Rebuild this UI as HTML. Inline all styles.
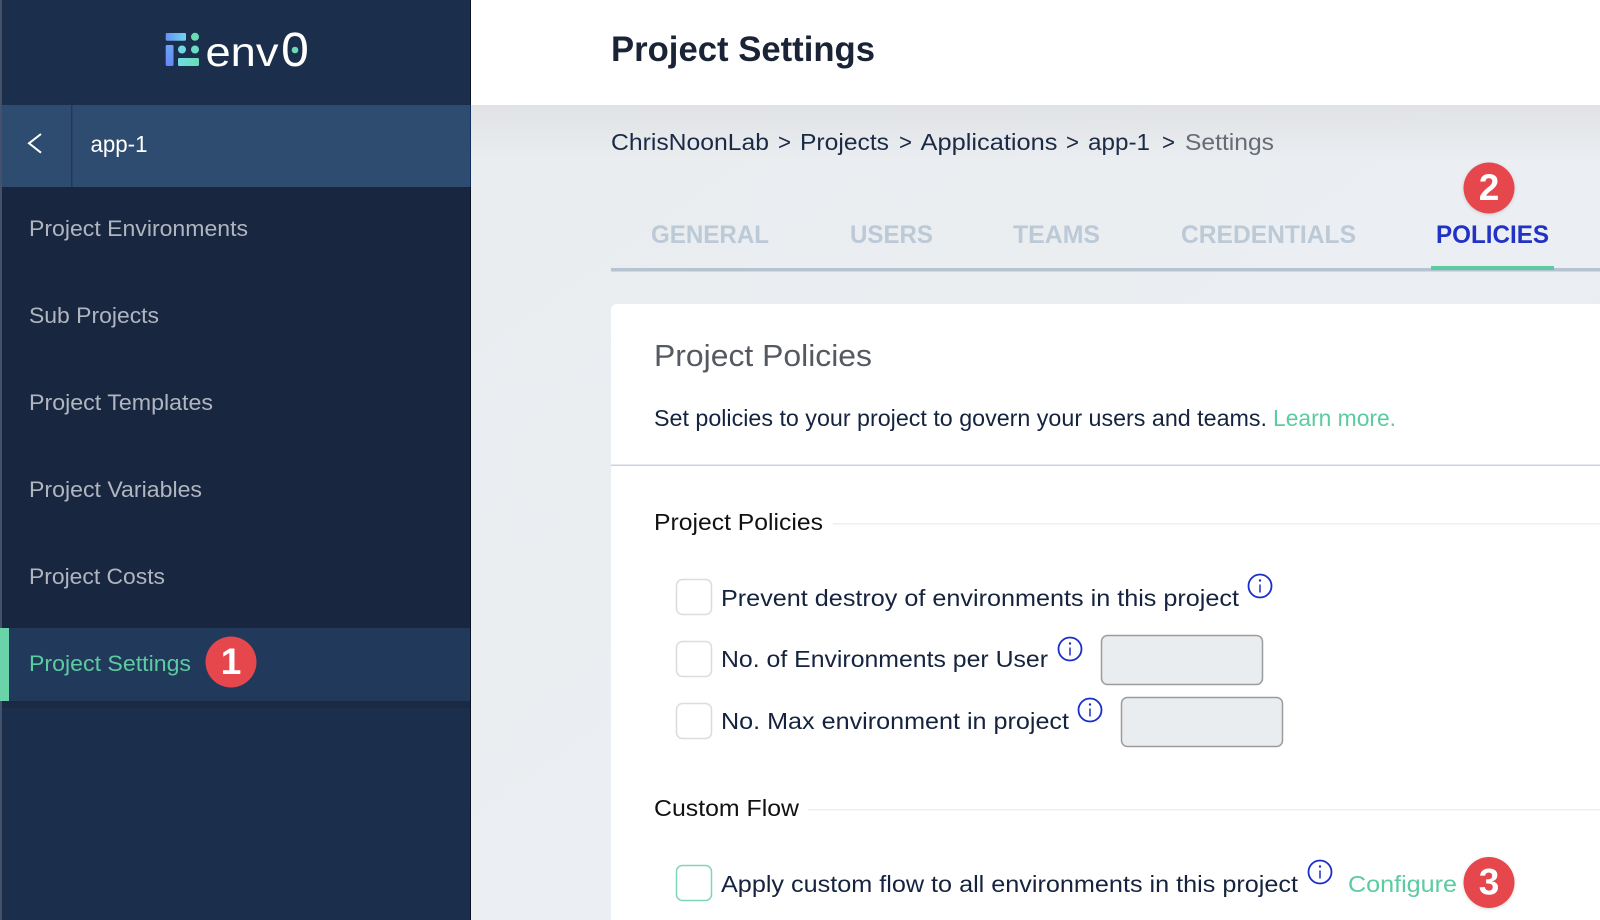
<!DOCTYPE html>
<html lang="en"><head><meta charset="utf-8"><title>Project Settings</title>
<style>
html,body{margin:0;padding:0;width:1600px;height:920px;overflow:hidden;background:#e9ecf0}
svg{display:block}
text{font-family:"Liberation Sans",sans-serif;fill:#1b2a45}
.nav{font-size:22.5px;fill:#b0b6c0}
.tab{font-size:25px;font-weight:700;fill:#bcc9d7}
.crumb{font-size:23.5px}
.row{font-size:23.5px;fill:#15233f}
.sec{font-size:23.5px;fill:#111}
.badge{font-size:37px;font-weight:700;fill:#fff;text-anchor:middle}
.link{fill:#5ccba0}
</style></head><body>
<svg width="1600" height="920" viewBox="0 0 1600 920" xmlns="http://www.w3.org/2000/svg">
<defs>
<linearGradient id="bg" x1="0" y1="0" x2="1" y2="1"><stop offset="0" stop-color="#eaedf0"/><stop offset=".6" stop-color="#ebeef2"/><stop offset="1" stop-color="#e4e6ea"/></linearGradient>
<linearGradient id="hs" x1="0" y1="0" x2="0" y2="1"><stop offset="0" stop-color="#e0e2e5"/><stop offset="1" stop-color="#e0e2e5" stop-opacity="0"/></linearGradient>
<linearGradient id="lg1" x1="0" y1="0" x2="1" y2="0"><stop offset="0" stop-color="#6691f5"/><stop offset="1" stop-color="#74d4ee"/></linearGradient>
<linearGradient id="lg2" x1="0" y1="0" x2="0" y2="1"><stop offset="0" stop-color="#6aa5f4"/><stop offset="1" stop-color="#6688f5"/></linearGradient>
<linearGradient id="lg3" x1="0" y1="0" x2="1" y2="0"><stop offset="0" stop-color="#6fdce6"/><stop offset="1" stop-color="#6adcb5"/></linearGradient>
<filter id="sh" x="-20%" y="-20%" width="140%" height="140%"><feDropShadow dx="0" dy="1" stdDeviation="1.5" flood-color="#000" flood-opacity=".15"/></filter>
</defs>

<!-- main background -->
<rect x="471" y="105" width="1129" height="815" fill="url(#bg)"/>
<rect x="471" y="105" width="1129" height="55" fill="url(#hs)"/>
<rect x="471" y="0" width="1129" height="105" fill="#fff"/>

<!-- sidebar -->
<rect x="0" y="0" width="471" height="920" fill="#1b2e4c"/>
<rect x="0" y="105" width="471" height="82" fill="#2e4c70"/>
<rect x="71" y="105" width="1.5" height="82" fill="#223a5a"/>
<rect x="0" y="187" width="471" height="441" fill="#18263f"/>
<rect x="0" y="628" width="471" height="73" fill="#21395a"/>
<rect x="0" y="701" width="471" height="7" fill="#1a2a44"/>
<rect x="0" y="628" width="9" height="73" fill="#6bd3aa"/>
<rect x="0" y="0" width="2" height="628" fill="#44516a"/>
<rect x="0" y="701" width="2" height="219" fill="#44516a"/>
<rect x="470" y="0" width="1" height="920" fill="#0b1424"/>
<rect x="470" y="105" width="1" height="82" fill="#12315f"/>

<!-- logo -->
<rect x="165.7" y="33" width="20.3" height="7.7" rx="1.2" fill="url(#lg1)"/>
<rect x="165.7" y="45" width="7.8" height="21" rx="1.2" fill="url(#lg2)"/>
<circle cx="195" cy="36.8" r="4" fill="#6adcb5"/>
<circle cx="182" cy="49.5" r="4" fill="#6fd8e6"/>
<circle cx="195" cy="49.5" r="4" fill="#6adcc5"/>
<rect x="178" y="58" width="21" height="8" rx="1.2" fill="url(#lg3)"/>
<text x="205.5" y="66" font-size="41" textLength="73" lengthAdjust="spacingAndGlyphs" style="fill:#fff">env</text>
<text x="280" y="66" font-size="50" textLength="30" lengthAdjust="spacingAndGlyphs" style="fill:#fff;font-family:'Liberation Mono',monospace">0</text>
<circle cx="295" cy="50" r="5.5" fill="#1b2e4c"/>
<circle cx="295" cy="50" r="3.3" fill="#6adcb5"/>

<!-- back row -->
<path d="M41 134 L29 143.3 L41 152.7" fill="none" stroke="#fff" stroke-width="2"/>
<text x="90.5" y="152" font-size="23" textLength="57" lengthAdjust="spacingAndGlyphs" style="fill:#fff">app-1</text>

<!-- nav -->
<text class="nav" x="29" y="236" textLength="219" lengthAdjust="spacingAndGlyphs">Project Environments</text>
<text class="nav" x="29" y="323" textLength="130" lengthAdjust="spacingAndGlyphs">Sub Projects</text>
<text class="nav" x="29" y="410" textLength="184" lengthAdjust="spacingAndGlyphs">Project Templates</text>
<text class="nav" x="29" y="497" textLength="173" lengthAdjust="spacingAndGlyphs">Project Variables</text>
<text class="nav" x="29" y="584" textLength="136" lengthAdjust="spacingAndGlyphs">Project Costs</text>
<text class="nav" x="29" y="671" textLength="162" lengthAdjust="spacingAndGlyphs" style="fill:#5ccba0">Project Settings</text>
<circle cx="231" cy="662" r="25.5" fill="#e5474d"/>
<text class="badge" x="231" y="674">1</text>

<!-- header -->
<text x="611" y="61" font-size="35" font-weight="700" textLength="264" lengthAdjust="spacingAndGlyphs" style="fill:#1a2436">Project Settings</text>

<!-- breadcrumb -->
<text class="crumb" x="611" y="150" textLength="158" lengthAdjust="spacingAndGlyphs">ChrisNoonLab</text>
<text class="crumb" x="778" y="150" textLength="13" lengthAdjust="spacingAndGlyphs">&gt;</text>
<text class="crumb" x="800" y="150" textLength="89" lengthAdjust="spacingAndGlyphs">Projects</text>
<text class="crumb" x="899" y="150" textLength="13" lengthAdjust="spacingAndGlyphs">&gt;</text>
<text class="crumb" x="920.5" y="150" textLength="137" lengthAdjust="spacingAndGlyphs">Applications</text>
<text class="crumb" x="1066" y="150" textLength="13" lengthAdjust="spacingAndGlyphs">&gt;</text>
<text class="crumb" x="1088" y="150" textLength="62" lengthAdjust="spacingAndGlyphs">app-1</text>
<text class="crumb" x="1162" y="150" textLength="13" lengthAdjust="spacingAndGlyphs">&gt;</text>
<text class="crumb" x="1185" y="150" textLength="89" lengthAdjust="spacingAndGlyphs" style="fill:#666c75">Settings</text>

<!-- tabs -->
<text class="tab" x="651" y="243" textLength="118" lengthAdjust="spacingAndGlyphs">GENERAL</text>
<text class="tab" x="850" y="243" textLength="83" lengthAdjust="spacingAndGlyphs">USERS</text>
<text class="tab" x="1013" y="243" textLength="87" lengthAdjust="spacingAndGlyphs">TEAMS</text>
<text class="tab" x="1181" y="243" textLength="175" lengthAdjust="spacingAndGlyphs">CREDENTIALS</text>
<text class="tab" x="1436" y="243" textLength="113" lengthAdjust="spacingAndGlyphs" style="fill:#2232c4">POLICIES</text>
<rect x="611" y="268" width="989" height="3.5" fill="#b6c3d1"/>
<rect x="1431" y="266" width="123" height="4" fill="#5ccba0"/>
<circle cx="1489" cy="188" r="25.5" fill="#e5474d" filter="url(#sh)"/>
<text class="badge" x="1489" y="200">2</text>

<!-- card -->
<path d="M1600 304H617a6 6 0 0 0-6 6V920H1600Z" fill="#fff"/>
<text x="654" y="366" font-size="31" textLength="218" lengthAdjust="spacingAndGlyphs" style="fill:#555a60">Project Policies</text>
<text x="654" y="426" font-size="23.5" textLength="613" lengthAdjust="spacingAndGlyphs" style="fill:#15233f">Set policies to your project to govern your users and teams.</text>
<text class="link" x="1273" y="426" font-size="23.5" textLength="123" lengthAdjust="spacingAndGlyphs">Learn more.</text>
<rect x="611" y="464.5" width="989" height="1.5" fill="#c8d4df"/>

<text class="sec" x="654" y="530" textLength="169" lengthAdjust="spacingAndGlyphs">Project Policies</text>
<rect x="833" y="523" width="767" height="1.5" fill="#eeeff1"/>

<rect x="676.5" y="579.5" width="35" height="35" rx="6" fill="#fff" stroke="#dcdcdc" stroke-width="1.5"/>
<text class="row" x="721" y="606" textLength="518" lengthAdjust="spacingAndGlyphs">Prevent destroy of environments in this project</text>
<g fill="none" stroke="#1a2fc8" stroke-width="1.8"><circle cx="1260" cy="586" r="11.5"/><path d="M1260 584.5v8" stroke-width="1.5"/></g><circle cx="1260" cy="580.5" r="1.2" fill="#1a2fc8"/>

<rect x="676.5" y="641.5" width="35" height="35" rx="6" fill="#fff" stroke="#dcdcdc" stroke-width="1.5"/>
<text class="row" x="721" y="667" textLength="327" lengthAdjust="spacingAndGlyphs">No. of Environments per User</text>
<g fill="none" stroke="#1a2fc8" stroke-width="1.8"><circle cx="1070" cy="649" r="11.5"/><path d="M1070 647.5v8" stroke-width="1.5"/></g><circle cx="1070" cy="643.5" r="1.2" fill="#1a2fc8"/>
<rect x="1101.5" y="635.5" width="161" height="49" rx="6" fill="#eaedef" stroke="#9a9c9e" stroke-width="1.5"/>

<rect x="676.5" y="703.5" width="35" height="35" rx="6" fill="#fff" stroke="#dcdcdc" stroke-width="1.5"/>
<text class="row" x="721" y="729" textLength="348" lengthAdjust="spacingAndGlyphs">No. Max environment in project</text>
<g fill="none" stroke="#1a2fc8" stroke-width="1.8"><circle cx="1090" cy="710" r="11.5"/><path d="M1090 708.5v8" stroke-width="1.5"/></g><circle cx="1090" cy="704.5" r="1.2" fill="#1a2fc8"/>
<rect x="1121.5" y="697.5" width="161" height="49" rx="6" fill="#eaedef" stroke="#9a9c9e" stroke-width="1.5"/>

<text class="sec" x="654" y="816" textLength="145" lengthAdjust="spacingAndGlyphs">Custom Flow</text>
<rect x="808" y="809" width="792" height="1.5" fill="#eeeff1"/>

<rect x="676.5" y="865.5" width="35" height="35" rx="6" fill="#fff" stroke="#7fd6b8" stroke-width="1.5"/>
<text class="row" x="721" y="892" textLength="577" lengthAdjust="spacingAndGlyphs">Apply custom flow to all environments in this project</text>
<g fill="none" stroke="#1a2fc8" stroke-width="1.8"><circle cx="1320" cy="872" r="11.5"/><path d="M1320 870.5v8" stroke-width="1.5"/></g><circle cx="1320" cy="866.5" r="1.2" fill="#1a2fc8"/>
<text class="row link" x="1348" y="892" textLength="109" lengthAdjust="spacingAndGlyphs" style="fill:#5ccba0">Configure</text>
<circle cx="1489" cy="882.5" r="25.5" fill="#e5474d" filter="url(#sh)"/>
<text class="badge" x="1489" y="894.5">3</text>
</svg>
</body></html>
